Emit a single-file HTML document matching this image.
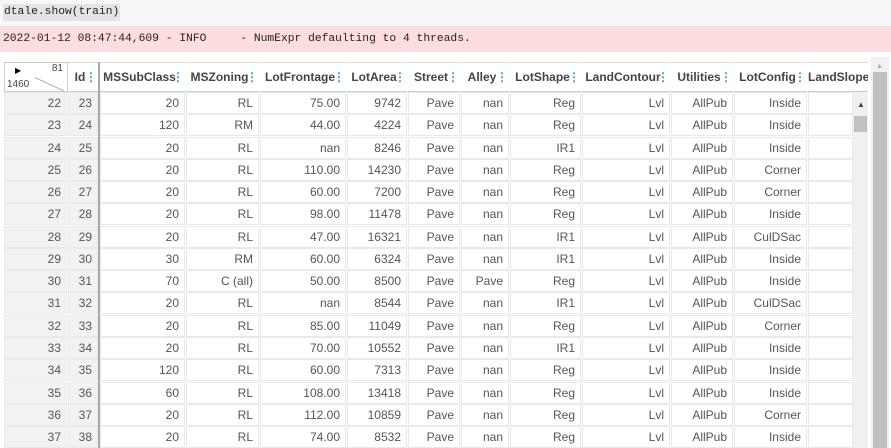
<!DOCTYPE html><html><head><style>
body{margin:0;width:891px;height:448px;overflow:hidden;background:#fff;font-family:"Liberation Sans",sans-serif;position:relative}
.top{position:absolute;left:0;top:0;width:891px;height:26px;background:#f7f7f7;border-bottom:1px solid #e0e0e0}
.code{position:absolute;left:3px;top:4px;background:#e4e4e4;font:11.3px "Liberation Mono",monospace;color:#222;padding:0 1px;line-height:17px}
.info{position:absolute;left:0;top:27px;width:891px;height:25px;background:#fddddd;font:11.3px "Liberation Mono",monospace;color:#222;line-height:25px;padding-left:3px;box-sizing:border-box;white-space:pre}
.grid{position:absolute;left:4px;top:62px;width:864px;height:386px;overflow:hidden}
.c{position:absolute;box-sizing:border-box;font-size:12px;color:#555;text-align:right;padding-right:5px;line-height:20px;border:1px solid #e9e9e9;background:#fff}
.ix{background:#f2f2f2}
.h{position:absolute;top:0;height:30px;line-height:28px;font-size:12px;font-weight:bold;color:#444;text-align:center;border-top:1px solid #ddd;border-bottom:1px solid #ccc;box-sizing:border-box;white-space:nowrap;overflow:hidden;padding-right:6px}
.h b{color:#2a9df4;font-weight:bold;position:absolute;right:1px;top:0}
.sb{position:absolute;left:849px;top:30px;width:17px;height:356px;background:#f1f1f1}
.osb{position:absolute;left:871px;top:57px;width:18px;height:391px;background:#f1f1f1}
</style></head><body>
<div class="top"><span class="code">dtale.show(train)</span></div>
<div class="info">2022-01-12 08:47:44,609 - INFO     - NumExpr defaulting to 4 threads.</div>
<div class="osb"><div style="position:absolute;left:5px;top:6px;font-size:7px;color:#aaa">▲</div><div style="position:absolute;left:2px;top:15px;width:14px;height:376px;background:#c1c1c1"></div></div>
<div class="grid" id="g">
<div style="position:absolute;left:0;top:0;width:64px;height:30px;border:1px solid #ccc;box-sizing:border-box;background:#fff">
<span style="position:absolute;left:10px;top:3px;font-size:8px">▶</span><span style="position:absolute;right:4px;top:0;font-size:10px;color:#444">81</span><span style="position:absolute;left:2px;bottom:1px;font-size:10px;color:#444">1460</span>
<div style="position:absolute;left:30px;top:14px;width:32px;height:1px;background:#aaa;transform:rotate(25deg);transform-origin:0 0"></div></div>
<div style="position:absolute;left:94px;top:0;width:2px;height:386px;background:#aaa"></div>
<div class="sb"><div style="position:absolute;left:4px;top:8px;font-size:8px;color:#444">▲</div><div style="position:absolute;left:1px;top:24px;width:13px;height:16px;background:#c1c1c1"></div></div>
</div>
<script>
var cols=[[64,94,'Id'],[96,181,'MSSubClass'],[182,255,'MSZoning'],[256,342,'LotFrontage'],[343,403,'LotArea'],[404,456,'Street'],[457,505,'Alley'],[506,577,'LotShape'],[578,666,'LandContour'],[667,729,'Utilities'],[730,803,'LotConfig'],[804,870,'LandSlope']];
var data=[
[20,'RL','75.00',9742,'Pave','nan','Reg','Lvl','AllPub','Inside'],
[120,'RM','44.00',4224,'Pave','nan','Reg','Lvl','AllPub','Inside'],
[20,'RL','nan',8246,'Pave','nan','IR1','Lvl','AllPub','Inside'],
[20,'RL','110.00',14230,'Pave','nan','Reg','Lvl','AllPub','Corner'],
[20,'RL','60.00',7200,'Pave','nan','Reg','Lvl','AllPub','Corner'],
[20,'RL','98.00',11478,'Pave','nan','Reg','Lvl','AllPub','Inside'],
[20,'RL','47.00',16321,'Pave','nan','IR1','Lvl','AllPub','CulDSac'],
[30,'RM','60.00',6324,'Pave','nan','IR1','Lvl','AllPub','Inside'],
[70,'C (all)','50.00',8500,'Pave','Pave','Reg','Lvl','AllPub','Inside'],
[20,'RL','nan',8544,'Pave','nan','IR1','Lvl','AllPub','CulDSac'],
[20,'RL','85.00',11049,'Pave','nan','Reg','Lvl','AllPub','Corner'],
[20,'RL','70.00',10552,'Pave','nan','IR1','Lvl','AllPub','Inside'],
[120,'RL','60.00',7313,'Pave','nan','Reg','Lvl','AllPub','Inside'],
[60,'RL','108.00',13418,'Pave','nan','Reg','Lvl','AllPub','Inside'],
[20,'RL','112.00',10859,'Pave','nan','Reg','Lvl','AllPub','Corner'],
[20,'RL','74.00',8532,'Pave','nan','Reg','Lvl','AllPub','Inside']];
var g=document.getElementById('g'),h='';
cols.forEach(function(c,i){h+='<div class="h" style="left:'+c[0]+'px;width:'+(c[1]-c[0])+'px">'+c[2]+(i<11?'<b>⋮</b>':'')+'</div>';});
data.forEach(function(r,j){var t=Math.round(30+j*22.27);
h+='<div class="c ix" style="left:0;top:'+t+'px;width:63px;height:22px">'+(22+j)+'</div>';
h+='<div class="c ix" style="left:64px;top:'+t+'px;width:30px;height:22px">'+(23+j)+'</div>';
for(var k=1;k<12;k++){var c=cols[k];var w=Math.min(c[1],849)-c[0];h+='<div class="c" style="left:'+c[0]+'px;top:'+t+'px;width:'+w+'px;height:22px">'+(r[k-1]!==undefined?r[k-1]:'')+'</div>';}
});
g.insertAdjacentHTML('afterbegin',h);
</script>
</body></html>
